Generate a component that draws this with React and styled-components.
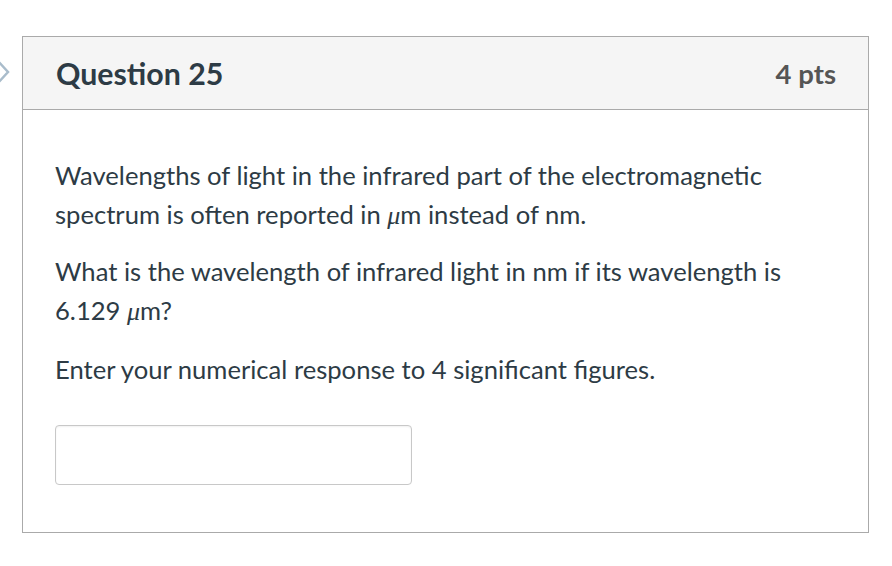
import React from 'react'
import styled, { createGlobalStyle } from 'styled-components'

const GlobalStyle = createGlobalStyle`
  html, body {
    margin: 0;
    padding: 0;
    background: #ffffff;
  }
  body {
    font-family: Lato, "Noto Sans", sans-serif;
    color: #2d3b45;
  }
`

const Page = styled.div`
  position: relative;
  width: 892px;
  height: 566px;
  padding: 36px 0 0 22px;
  box-sizing: border-box;
`

const Flag = styled.svg`
  position: absolute;
  left: -5px;
  top: 59px;
`

const Card = styled.div`
  width: 847px;
  border: 1px solid #aaaaaa;
  box-sizing: border-box;
`

const Header = styled.div`
  display: flex;
  align-items: center;
  justify-content: space-between;
  height: 72px;
  padding: 0 32px 0 33px;
  background: #f5f5f5;
  border-bottom: 1px solid #aaaaaa;
`

const Title = styled.h2`
  margin: 0;
  font-size: 30.3px;
  font-weight: 700;
  color: #2d3b45;
`

const Points = styled.span`
  font-size: 27.5px;
  font-weight: 700;
  color: #555555;
`

const Body = styled.div`
  padding: 46px 32px 47px 32px;
`

const Para = styled.p`
  margin: 0 0 ${(p) => p.$gap || 18}px 0;
  font-size: 25.6px;
  line-height: 39px;
  color: #2d3b45;
`

const Mu = styled.span`
  font-family: "Liberation Serif", "DejaVu Serif", serif;
  font-style: italic;
  font-size: 26px;
  line-height: 1;
`

const Answer = styled.input`
  display: block;
  margin-top: 36px;
  width: 357px;
  height: 60px;
  box-sizing: border-box;
  border: 1px solid #c8c8c8;
  border-radius: 4px;
  background: #ffffff;
  box-shadow: inset 0 1px 2px rgba(0, 0, 0, 0.06);
  outline: none;
`

const Micro = () => (
  <>
    <Mu>μ</Mu>m
  </>
)

export default function App() {
  return (
    <>
      <GlobalStyle />
      <Page>
        <Flag width="16" height="26" viewBox="0 0 16 26">
          <polyline points="2,1 13,13 2,25" fill="none" stroke="#a9bccb" strokeWidth="2.5" />
        </Flag>
        <Card>
          <Header>
            <Title>Question 25</Title>
            <Points>4 pts</Points>
          </Header>
          <Body>
            <Para>
              Wavelengths of light in the infrared part of the electromagnetic spectrum is often reported in <Micro /> instead of nm.
            </Para>
            <Para $gap={20}>
              What is the wavelength of infrared light in nm if its wavelength is 6.129 <Micro />?
            </Para>
            <Para>Enter your numerical response to 4 significant figures.</Para>
            <Answer type="text" />
          </Body>
        </Card>
      </Page>
    </>
  )
}
